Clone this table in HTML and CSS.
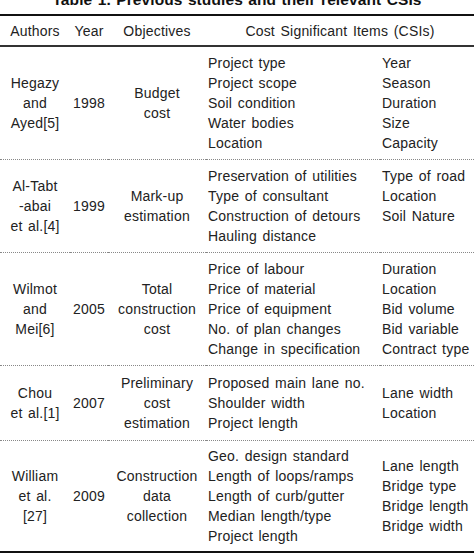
FILE: index.html
```html
<!DOCTYPE html>
<html>
<head>
<meta charset="utf-8">
<link rel="stylesheet" href="styles.css">
</head>
<body>
<div class="title">Table 1. Previous studies and their relevant CSIs</div>
<table class="csi">
  <colgroup>
    <col class="c-auth">
    <col class="c-year">
    <col class="c-obj">
    <col class="c-items">
    <col class="c-extra">
  </colgroup>
  <thead>
    <tr>
      <th>Authors</th>
      <th>Year</th>
      <th>Objectives</th>
      <th colspan="2">Cost Significant Items (CSIs)</th>
    </tr>
  </thead>
  <tbody>
    <tr class="r5">
      <td class="mid">Hegazy<br>and<br>Ayed[5]</td>
      <td class="mid">1998</td>
      <td class="mid">Budget<br>cost</td>
      <td class="lft">Project type<br>Project scope<br>Soil condition<br>Water bodies<br>Location</td>
      <td class="lft">Year<br>Season<br>Duration<br>Size<br>Capacity</td>
    </tr>
    <tr class="r4">
      <td class="mid">Al-Tabt<br>-abai<br>et al.[4]</td>
      <td class="mid">1999</td>
      <td class="mid">Mark-up<br>estimation</td>
      <td class="lft">Preservation of utilities<br>Type of consultant<br>Construction of detours<br>Hauling distance</td>
      <td class="lft top">Type of road<br>Location<br>Soil Nature</td>
    </tr>
    <tr class="r5">
      <td class="mid">Wilmot<br>and<br>Mei[6]</td>
      <td class="mid">2005</td>
      <td class="mid">Total<br>construction<br>cost</td>
      <td class="lft">Price of labour<br>Price of material<br>Price of equipment<br>No. of plan changes<br>Change in specification</td>
      <td class="lft">Duration<br>Location<br>Bid volume<br>Bid variable<br>Contract type</td>
    </tr>
    <tr class="r3">
      <td class="mid">Chou<br>et al.[1]</td>
      <td class="mid">2007</td>
      <td class="mid">Preliminary<br>cost<br>estimation</td>
      <td class="lft">Proposed main lane no.<br>Shoulder width<br>Project length</td>
      <td class="lft">Lane width<br>Location</td>
    </tr>
    <tr class="r5 last">
      <td class="mid">William<br>et al.<br>[27]</td>
      <td class="mid">2009</td>
      <td class="mid">Construction<br>data<br>collection</td>
      <td class="lft">Geo. design standard<br>Length of loops/ramps<br>Length of curb/gutter<br>Median length/type<br>Project length</td>
      <td class="lft">Lane length<br>Bridge type<br>Bridge length<br>Bridge width</td>
    </tr>
  </tbody>
</table>
</body>
</html>
```

FILE: styles.css
```css
html, body {
  margin: 0;
  padding: 0;
  background: #ffffff;
}

body {
  font-family: "Liberation Sans", Arial, sans-serif;
  color: #222;
  overflow: hidden;
}

.title {
  margin-top: -8px;
  height: 16px;
  line-height: 16px;
  margin-bottom: 6px;
  text-align: center;
  font-size: 15.5px;
  font-weight: bold;
  color: #111;
  letter-spacing: 0.1px;
  word-spacing: 1px;
}

.csi {
  width: 474px;
  table-layout: fixed;
  border-collapse: collapse;
  border-top: 2px solid #111;
  border-bottom: 4px solid #111;
  font-size: 14px;
  line-height: 20px;
  letter-spacing: 0.2px;
  word-spacing: 1.5px;
}

.c-auth { width: 70px; }
.c-year { width: 38px; }
.c-obj { width: 98px; }
.c-items { width: 174px; }
.c-extra { width: 94px; }

.csi th {
  font-weight: normal;
  height: 29px;
  padding: 0;
  text-align: center;
  vertical-align: middle;
  border-bottom: 2px solid #333;
  white-space: nowrap;
}

.csi td {
  padding: 6px 0;
  vertical-align: middle;
  white-space: nowrap;
  border-bottom: 1px dotted #888;
}

.csi tr.r3 td {
  padding-top: 7px;
  padding-bottom: 7px;
}

.csi tr.last td {
  padding-top: 5px;
  padding-bottom: 5px;
  border-bottom: none;
}

.csi td.mid {
  text-align: center;
}

.csi td.lft {
  text-align: left;
  padding-left: 2px;
}

.csi td.top {
  vertical-align: top;
}
```
